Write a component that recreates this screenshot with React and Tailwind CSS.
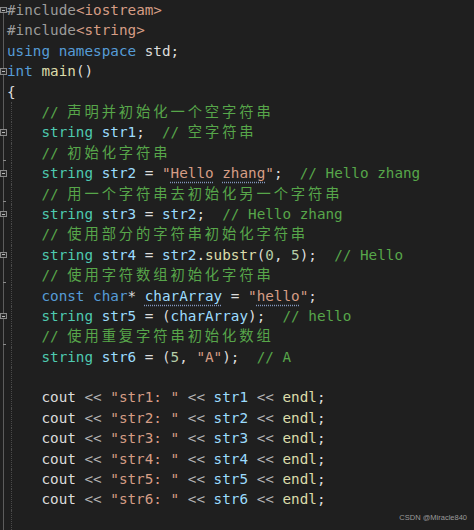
import React from "react";

// VS dark theme colours
const K = "text-[#569cd6]"; // keyword
const T = "text-[#4ec9b0]"; // type
const V = "text-[#9cdcfe]"; // variable
const S = "text-[#d69d85]"; // string
const G = "text-[#57a64a]"; // comment
const F = "text-[#dcdcaa]"; // function
const X = "text-[#dcdcdc]"; // plain
const O = "text-[#b4b4b4]"; // operator
const P = "text-[#9b9b9b]"; // preprocessor
const N = "text-[#b5cea8]"; // number
const U = "underline decoration-dotted decoration-[#8497bd] underline-offset-[4px]";

const CJK = /([\u3400-\u9fff]+)/;

// CJK chars take two columns in the editor font
function Txt({ text }) {
  return text.split(CJK).map((part, i) =>
    CJK.test(part) ? (
      <span key={i} className="tracking-[2.9px]">{part}</span>
    ) : (
      <React.Fragment key={i}>{part}</React.Fragment>
    )
  );
}

const cout = (n) => [
  ["    cout ", X],
  ["<<", O],
  [" ", X],
  [`"str${n}: "`, S],
  [" ", X],
  ["<<", O],
  [" ", X],
  [`str${n}`, V],
  [" ", X],
  ["<<", O],
  [" ", X],
  ["endl", F],
  [";", X],
];

const lines = [
  { m: true, t: [["#include", P], ["<iostream>", S]] },
  { t: [["#include", P], ["<string>", S]] },
  { t: [["using", K], [" ", X], ["namespace", K], [" std;", X]] },
  { m: true, t: [["int", K], [" ", X], ["main", F], ["()", X]] },
  { t: [["{", X]] },
  { t: [["    // 声明并初始化一个空字符串", G]] },
  { m: true, t: [["    string", T], [" ", X], ["str1", V], [";  ", X], ["// 空字符串", G]] },
  { tick: true, t: [["    // 初始化字符串", G]] },
  {
    m: true,
    t: [
      ["    string", T], [" ", X], ["str2", V], [" = ", X], ['"', S], ["Hello", S, U], [" ", S], ["zhang", S, U], ['"', S],
      [";  ", X], ["// Hello zhang", G],
    ],
  },
  { tick: true, t: [["    // 用一个字符串去初始化另一个字符串", G]] },
  { m: true, t: [["    string", T], [" ", X], ["str3", V], [" = ", X], ["str2", V], [";  ", X], ["// Hello zhang", G]] },
  { t: [["    // 使用部分的字符串初始化字符串", G]] },
  {
    m: true,
    t: [
      ["    string", T], [" ", X], ["str4", V], [" = ", X], ["str2", V], [".", X], ["substr", F], ["(", X], ["0", N], [", ", X],
      ["5", N], [");  ", X], ["// Hello", G],
    ],
  },
  { tick: true, t: [["    // 使用字符数组初始化字符串", G]] },
  {
    t: [
      ["    const", K], [" ", X], ["char", K], ["* ", X], ["charArray", V, U], [" = ", X], ['"', S], ["hello", S, U], ['"', S], [";", X],
    ],
  },
  { m: true, t: [["    string", T], [" ", X], ["str5", V], [" = (", X], ["charArray", V], [");  ", X], ["// hello", G]] },
  { tick: true, t: [["    // 使用重复字符串初始化数组", G]] },
  { t: [["    string", T], [" ", X], ["str6", V], [" = (", X], ["5", N], [", ", X], ['"A"', S], [");  ", X], ["// A", G]] },
  { t: [] },
  ...[1, 2, 3, 4, 5, 6].map((n) => ({ t: cout(n) })),
  { t: [] },
];

export default function App() {
  return (
    <div className="relative w-[474px] h-[530px] overflow-hidden bg-[#1f1f1f] font-['DejaVu_Sans_Mono','Noto_Sans_CJK_SC',monospace] text-[14.3px]">
      {lines.map((ln, i) => (
        <div key={i} className="flex h-[20.4px] items-center">
          {/* outlining margin */}
          <div className={`relative w-[7px] h-full shrink-0 flex justify-center ${i === 0 ? "items-end" : "items-stretch"}`}>
            <div className={`w-px bg-[#5c5c5c] ${i === 0 ? "h-1/2" : "h-full"}`} />
            {ln.m && (
              <div className="absolute inset-y-[7px] inset-x-0 border border-[#8a8a8a] bg-[#2a2a2a] flex items-center justify-center">
                <div className="w-[3px] h-px bg-[#bbbbbb]" />
              </div>
            )}
            {ln.tick && <div className="absolute left-[3px] bottom-[2px] w-[3px] h-px bg-[#8a8a8a]" />}
          </div>
          {/* code */}
          <div className="relative flex-1 h-full flex items-center whitespace-pre leading-none">
            {i >= 5 && <div className="absolute left-[4px] inset-y-0 border-l border-dotted border-[#4a4a4a]" />}
            {ln.t.map(([text, color, extra], j) => (
              <span key={j} className={`${color} ${extra || ""}`}>
                <Txt text={text} />
              </span>
            ))}
          </div>
        </div>
      ))}
      <div className="absolute right-[7px] bottom-[7px] text-[7.5px] text-[#9a9a9a] font-['Liberation_Sans',sans-serif]">
        CSDN @Miracle840
      </div>
    </div>
  );
}
